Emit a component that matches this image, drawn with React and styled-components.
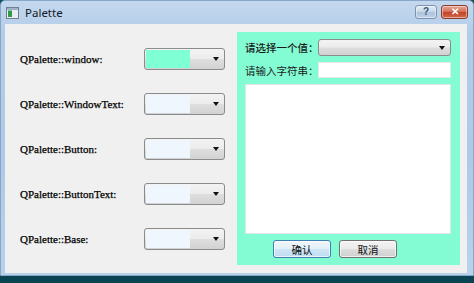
import React from 'react';
import styled, { createGlobalStyle } from 'styled-components';

const GlobalStyle = createGlobalStyle`
  html, body {
    margin: 0;
    padding: 0;
    background: #0d4b5a;
  }
  * {
    box-sizing: border-box;
  }
`;

const Desktop = styled.div`
  width: 474px;
  height: 283px;
  background: linear-gradient(180deg, #11515f 0%, #0a4453 100%);
  overflow: hidden;
`;

const Frame = styled.div`
  width: 474px;
  height: 276px;
  display: flex;
  flex-direction: column;
  background: linear-gradient(180deg, #c3d8ee 0%, #b3cce8 12%, #aecae8 60%, #b9d2ec 100%);
  border: 1px solid #8aa6c6;
  border-radius: 5px 5px 0 0;
`;

const TitleBar = styled.div`
  height: 23px;
  display: flex;
  align-items: center;
  padding: 0 5px 0 5px;
  gap: 4px;
`;

const TitleText = styled.span`
  flex: 1;
  font-family: "Noto Sans", "Liberation Sans", sans-serif;
  font-size: 11.5px;
  color: #121a26;
  margin-left: 2px;
`;

const CaptionButton = styled.div`
  width: ${({ $wide }) => ($wide ? '27px' : '22px')};
  height: 14px;
  margin-top: -2px;
  border: 1px solid ${({ $close }) => ($close ? '#8a3c2e' : '#7d92ad')};
  border-radius: 3px;
  display: flex;
  align-items: center;
  justify-content: center;
  font-family: "Liberation Sans", sans-serif;
  font-weight: bold;
  font-size: 10px;
  color: ${({ $close }) => ($close ? '#ffffff' : '#3c5373')};
  background: ${({ $close }) =>
    $close
      ? 'linear-gradient(180deg, #e8a493 0%, #d4735d 45%, #c2432a 55%, #d46a4b 100%)'
      : 'linear-gradient(180deg, #e2ecf7 0%, #c8d8ea 45%, #aec3dc 55%, #bfd2e8 100%)'};
  box-shadow: inset 0 0 0 1px rgba(255, 255, 255, 0.45);
`;

const Client = styled.div`
  flex: 1;
  margin: 0 6px 2px 4px;
  background: #f0f0f0;
  display: flex;
  padding: 8px 7px 8px 0;
`;

const LeftColumn = styled.div`
  width: 232px;
  padding: 4px 0 0 15px;
  display: flex;
  flex-direction: column;
`;

const PaletteRow = styled.div`
  height: 45px;
  display: flex;
  align-items: center;
`;

const RowLabel = styled.span`
  width: 124px;
  font-family: "Liberation Serif", serif;
  font-size: 11px;
  color: #000;
  -webkit-text-stroke: 0.25px #000;
`;

const Combo = styled.div`
  width: ${({ $width }) => $width};
  height: ${({ $height }) => $height};
  border: 1px solid #8b8b8b;
  border-radius: 3px;
  display: flex;
  align-items: stretch;
  background: linear-gradient(180deg, #f3f3f3 0%, #ececec 48%, #dedede 52%, #d2d2d2 100%);
  padding: 1px;
`;

const Swatch = styled.div`
  flex: 1;
  background: ${({ $color }) => $color};
  margin-right: 19px;
`;

const Spacer = styled.div`
  flex: 1;
`;

const ArrowBox = styled.div`
  width: 14px;
  display: flex;
  align-items: center;
  justify-content: center;
`;

const Arrow = styled.div`
  width: 0;
  height: 0;
  border-left: 3.5px solid transparent;
  border-right: 3.5px solid transparent;
  border-top: 4px solid #111;
`;

const Panel = styled.div`
  flex: 1;
  background: #84fcd3;
  padding: 7px 9px 7px 8px;
  display: flex;
  flex-direction: column;
  gap: 6px;
`;

const FormRow = styled.div`
  display: flex;
  align-items: center;
  height: ${({ $height }) => $height};
`;

const FormLabel = styled.span`
  width: 73px;
  font-family: "Noto Sans CJK SC", "Noto Sans", sans-serif;
  font-size: 10.5px;
  font-weight: ${({ $bold }) => ($bold ? 500 : 400)};
  color: #1a1a1a;
  white-space: nowrap;
`;

const LineEdit = styled.div`
  flex: 1;
  height: 100%;
  background: #fff;
  border: 1px solid #e4e9ee;
`;

const TextEdit = styled.div`
  flex: 1;
  background: #fff;
  border: 1px solid #dfe6eb;
`;

const ButtonRow = styled.div`
  display: flex;
  gap: 8px;
  padding-left: 28px;
  height: 18px;
`;

const PushButton = styled.div`
  width: 58px;
  height: 18px;
  border: 1px solid ${({ $default }) => ($default ? '#3c7fb1' : '#707070')};
  border-radius: 3px;
  display: flex;
  align-items: center;
  justify-content: center;
  font-family: "Noto Sans CJK SC", sans-serif;
  font-size: 10.5px;
  color: #111;
  background: ${({ $default }) =>
    $default
      ? 'linear-gradient(180deg, #f0f7fc 0%, #e3f0fa 48%, #cde5f6 52%, #c0dcf1 100%)'
      : 'linear-gradient(180deg, #f2f2f2 0%, #ebebeb 48%, #dddddd 52%, #cfcfcf 100%)'};
  box-shadow: inset 0 0 0 1px rgba(255, 255, 255, 0.7);
`;

const AppIcon = () => (
  <svg width="13" height="12" viewBox="0 0 13 12">
    <rect x="0.5" y="0.5" width="12" height="11" fill="#e9edf2" stroke="#6f7f90" />
    <rect x="1" y="1" width="11" height="2" fill="#9fb3c8" />
    <rect x="2" y="3.5" width="4" height="6.5" fill="#2f9a4a" />
  </svg>
);

const rows = [
  { label: 'QPalette::window:', color: '#7fffd4' },
  { label: 'QPalette::WindowText:', color: '#eff6fd' },
  { label: 'QPalette::Button:', color: '#eff6fd' },
  { label: 'QPalette::ButtonText:', color: '#eff6fd' },
  { label: 'QPalette::Base:', color: '#eff6fd' },
];

const App = () => (
  <Desktop>
    <GlobalStyle />
    <Frame>
      <TitleBar>
        <AppIcon />
        <TitleText>Palette</TitleText>
        <CaptionButton>?</CaptionButton>
        <CaptionButton $wide $close>✕</CaptionButton>
      </TitleBar>
      <Client>
        <LeftColumn>
          {rows.map((row) => (
            <PaletteRow key={row.label}>
              <RowLabel>{row.label}</RowLabel>
              <Combo $width="81px" $height="22px">
                <Swatch $color={row.color} />
                <ArrowBox>
                  <Arrow />
                </ArrowBox>
              </Combo>
            </PaletteRow>
          ))}
        </LeftColumn>
        <Panel>
          <FormRow $height="17px">
            <FormLabel $bold>请选择一个值：</FormLabel>
            <Combo $width="133px" $height="17px">
              <Spacer />
              <ArrowBox>
                <Arrow />
              </ArrowBox>
            </Combo>
          </FormRow>
          <FormRow $height="16px">
            <FormLabel>请输入字符串：</FormLabel>
            <LineEdit />
          </FormRow>
          <TextEdit />
          <ButtonRow>
            <PushButton $default>确认</PushButton>
            <PushButton>取消</PushButton>
          </ButtonRow>
        </Panel>
      </Client>
    </Frame>
  </Desktop>
);

export default App;
